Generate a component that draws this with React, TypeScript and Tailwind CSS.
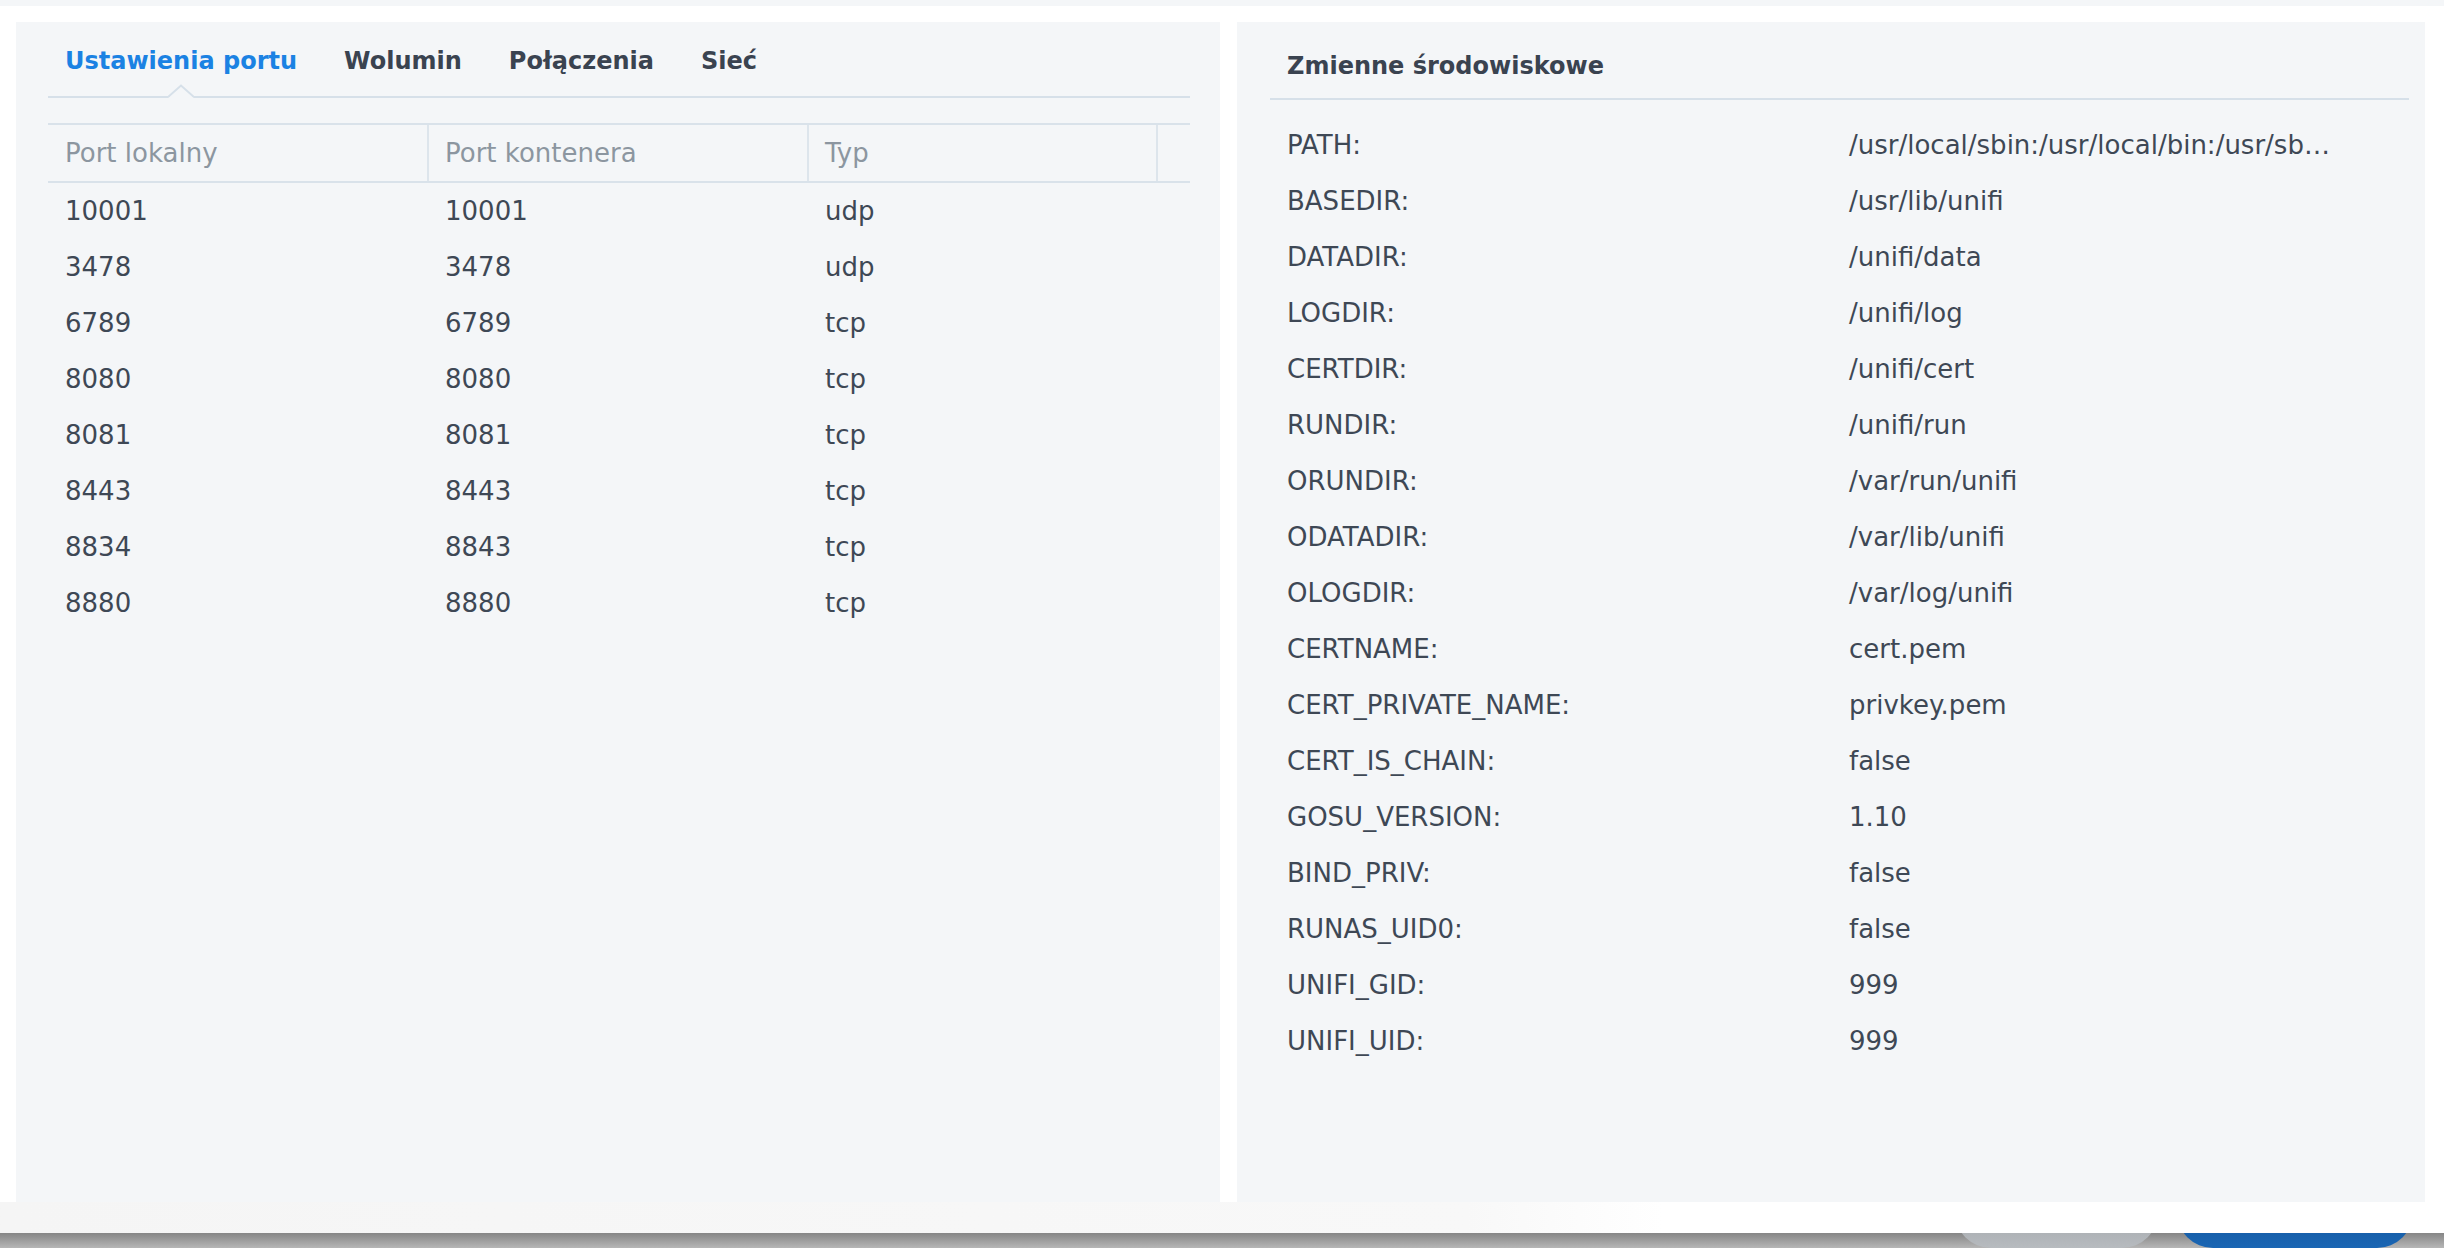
// Container details dialog — port table on the left, environment
// variables on the right. Rendered at 2x (Synology-style DSM panel).

const ports: [string, string, string][] = [
  ["10001", "10001", "udp"],
  ["3478", "3478", "udp"],
  ["6789", "6789", "tcp"],
  ["8080", "8080", "tcp"],
  ["8081", "8081", "tcp"],
  ["8443", "8443", "tcp"],
  ["8834", "8843", "tcp"],
  ["8880", "8880", "tcp"],
];

// PATH is shown already shortened, the way the dialog displays it.
const envs: [string, string][] = [
  ["PATH", "/usr/local/sbin:/usr/local/bin:/usr/sb…"],
  ["BASEDIR", "/usr/lib/unifi"],
  ["DATADIR", "/unifi/data"],
  ["LOGDIR", "/unifi/log"],
  ["CERTDIR", "/unifi/cert"],
  ["RUNDIR", "/unifi/run"],
  ["ORUNDIR", "/var/run/unifi"],
  ["ODATADIR", "/var/lib/unifi"],
  ["OLOGDIR", "/var/log/unifi"],
  ["CERTNAME", "cert.pem"],
  ["CERT_PRIVATE_NAME", "privkey.pem"],
  ["CERT_IS_CHAIN", "false"],
  ["GOSU_VERSION", "1.10"],
  ["BIND_PRIV", "false"],
  ["RUNAS_UID0", "false"],
  ["UNIFI_GID", "999"],
  ["UNIFI_UID", "999"],
];

const tabs = ["Ustawienia portu", "Wolumin", "Połączenia", "Sieć"];

export default function App() {
  return (
    <div className="flex h-[1248px] w-full flex-col overflow-hidden bg-white font-['DejaVu_Sans',sans-serif] text-[#3e4855]">
      <div className="h-[6px] shrink-0 bg-[#f4f6f8]" />
      <div className="flex h-[1196px] shrink-0 gap-[17px] pl-[16px] pt-[16px]">
        <PortPanel />
        <EnvPanel />
      </div>
      <div className="h-[31px] shrink-0 bg-linear-to-r from-[#f5f5f5] via-[#f8f8f8] via-60% to-white to-68%" />
      <Footer />
    </div>
  );
}

// ---------------------------------------------------------------------

function PortPanel() {
  return (
    <section className="flex h-[1180px] w-[1204px] shrink-0 flex-col bg-[#f4f6f8] pl-[32px] pr-[30px]">
      <nav className="flex gap-[47px] border-b-2 border-[#d6e0e9] pl-[17px]">
        {tabs.map((t, i) => (
          <div
            key={t}
            className={`relative pb-[21px] pt-[25px] text-[24px] font-bold leading-[28px] ${
              i === 0 ? "text-[#1b82e3]" : "text-[#3a4350]"
            }`}
          >
            {t}
            {i === 0 && (
              <svg
                width="26"
                height="14"
                viewBox="0 0 26 14"
                className="absolute bottom-[-2px] left-1/2 -translate-x-1/2"
              >
                <polygon points="0,14 13,1 26,14" fill="#f4f6f8" />
                <polyline
                  points="0,13 13,1.5 26,13"
                  fill="none"
                  stroke="#d6e0e9"
                  strokeWidth="2"
                />
              </svg>
            )}
          </div>
        ))}
      </nav>

      <div className="mt-[25px] flex h-[60px] border-y-2 border-[#d9e2ea] text-[26px] leading-[28px] text-[#8c96a0]">
        <div className="flex w-[381px] items-center border-r-2 border-[#dde5ec] pl-[17px]">
          Port lokalny
        </div>
        <div className="flex w-[380px] items-center border-r-2 border-[#dde5ec] pl-[16px]">
          Port kontenera
        </div>
        <div className="flex w-[349px] items-center border-r-2 border-[#dde5ec] pl-[16px]">
          Typ
        </div>
        <div className="flex-1" />
      </div>

      <ul className="text-[26px] leading-[28px]">
        {ports.map(([local, container, type]) => (
          <li key={local} className="flex h-[56px] items-center">
            <span className="w-[381px] pl-[17px]">{local}</span>
            <span className="w-[380px] pl-[16px]">{container}</span>
            <span className="pl-[16px]">{type}</span>
          </li>
        ))}
      </ul>
    </section>
  );
}

function EnvPanel() {
  return (
    <section className="flex h-[1180px] w-[1188px] shrink-0 flex-col bg-[#f4f6f8] pl-[33px] pr-[16px]">
      <h2 className="border-b-2 border-[#d6e0e9] pb-[18px] pl-[17px] pt-[30px] text-[24px] font-bold leading-[28px] text-[#3a4350]">
        Zmienne środowiskowe
      </h2>
      <ul className="pt-[17px] text-[26px] leading-[28px]">
        {envs.map(([key, value]) => (
          <li key={key} className="flex h-[56px] items-center pl-[17px]">
            <span className="w-[562px] shrink-0">{key}:</span>
            <span className="whitespace-nowrap">{value}</span>
          </li>
        ))}
      </ul>
    </section>
  );
}

function Footer() {
  // Only the lower edge of the dimmed action bar peeks out below the dialog.
  return (
    <div className="flex h-[15px] shrink-0 items-start justify-end gap-[19px] overflow-hidden bg-linear-to-b from-[#868686] to-[#b6b6b6] pr-[31px]">
      <div className="mt-[-57px] h-[72px] w-[203px] shrink-0 rounded-full bg-linear-to-b from-[#8f9499] to-[#b7bbbf]" />
      <div className="mt-[-57px] h-[72px] w-[236px] shrink-0 rounded-full bg-linear-to-b from-[#0f4a88] to-[#1a66b4]" />
    </div>
  );
}
